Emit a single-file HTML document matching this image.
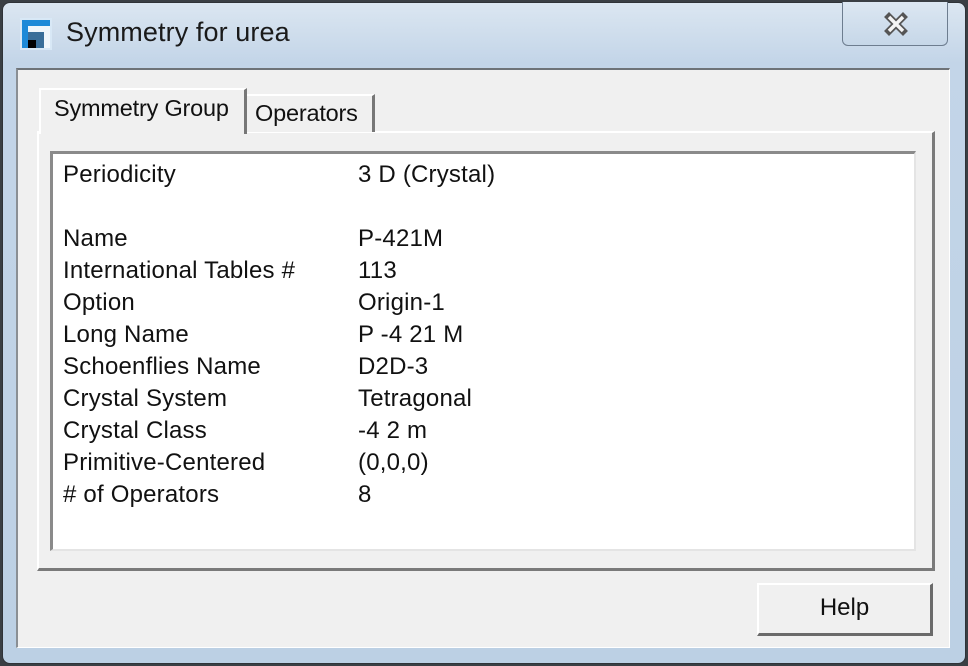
<!DOCTYPE html>
<html><head><style>
*{margin:0;padding:0;box-sizing:border-box}
body{width:968px;height:666px;background:#3a3f44;position:relative;overflow:hidden;font-family:"Liberation Sans",sans-serif;color:#111}
.win{position:absolute;left:2px;top:2px;width:964px;height:662px;border:1px solid #2f3338;border-radius:8px;background:linear-gradient(#dbe6f1 0,#c3d5e8 60px,#bcd0e4 100%)}
.title{position:absolute;left:66px;top:17px;font-size:27px;color:#1a1a1a;letter-spacing:0.1px}
.icon{position:absolute;left:20px;top:18px;width:32px;height:32px;background:#1e8ad8;border:2px solid #d8e8f6}
.close{position:absolute;left:842px;top:2px;width:106px;height:44px;border:1px solid #6d7d8f;border-top:none;border-radius:0 0 6px 6px;background:linear-gradient(#dce7f2,#c6d7e8)}
.client{position:absolute;left:16px;top:68px;width:934px;height:580px;background:#f0f0f0;border-top:2px solid #6e7378;border-left:2px solid #8a8f94;border-right:1px solid #fff;border-bottom:1px solid #fff}
.panel{position:absolute;left:37px;top:131px;width:898px;height:440px;border-left:2px solid #fff;border-top:2px solid #fff;border-right:3px solid #7a7a7a;border-bottom:3px solid #7a7a7a}
.inner{position:absolute;left:50px;top:151px;width:866px;height:400px;background:#fff;border-top:3px solid #8a8a8a;border-left:3px solid #8a8a8a;border-right:2px solid #e4e4e4;border-bottom:2px solid #e4e4e4}
.tab{position:absolute;font-size:23.5px;letter-spacing:-0.2px}
.t1{left:39px;top:88px;width:208px;height:46px;background:#f0f0f0;border-left:2px solid #fff;border-top:2px solid #fff;border-right:3px solid #777;padding:5px 0 0 13px}
.t2{left:247px;top:94px;width:128px;height:38px;background:#f0f0f0;border-top:2px solid #fff;border-right:3px solid #777;padding:4px 0 0 8px}
.row{position:absolute;font-size:24px;letter-spacing:0.2px;line-height:32px}
.l{left:63px}.v{left:358px}
.help{position:absolute;left:757px;top:583px;width:176px;height:53px;border-left:2px solid #fff;border-top:2px solid #fff;border-right:3px solid #6a6a6a;border-bottom:3px solid #6a6a6a;background:#f0f0f0;font-size:24px;text-align:center;line-height:46px}
</style></head><body>
<div class="win"></div>
<div class="icon"><div style="position:absolute;left:6px;top:6px;width:22px;height:22px;background:#f0f6fb"></div><div style="position:absolute;left:6px;top:12px;width:16px;height:16px;background:#3a6e99"></div><div style="position:absolute;left:6px;top:20px;width:8px;height:8px;background:#000"></div></div>
<div class="title">Symmetry for urea</div>
<div class="close"><svg width="106" height="44" style="position:absolute;left:0;top:0"><path d="M46 15 L60 29 M60 15 L46 29" stroke="#555" stroke-width="7" stroke-linecap="square"/><path d="M46 15 L60 29 M60 15 L46 29" stroke="#f4f4f4" stroke-width="3.5"/></svg></div>
<div class="client"></div>
<div class="panel"></div>
<div class="tab t2">Operators</div>
<div class="tab t1">Symmetry Group</div>
<div class="inner"></div>
<div class="row l" style="top:159px">Periodicity</div><div class="row v" style="top:159px">3 D (Crystal)</div>
<div class="row l" style="top:223px">Name<br>International Tables #<br>Option<br>Long Name<br>Schoenflies Name<br>Crystal System<br>Crystal Class<br>Primitive-Centered<br># of Operators</div>
<div class="row v" style="top:223px">P-421M<br>113<br>Origin-1<br>P -4 21 M<br>D2D-3<br>Tetragonal<br>-4 2 m<br>(0,0,0)<br>8</div>
<div class="help">Help</div>
</body></html>
